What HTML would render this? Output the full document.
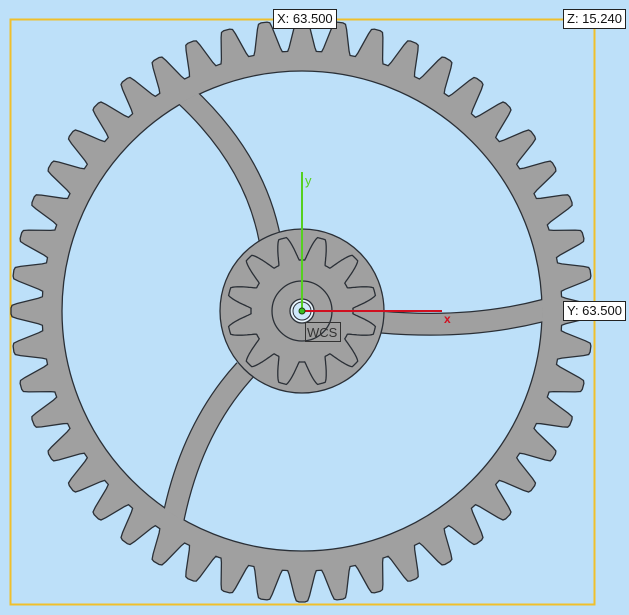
<!DOCTYPE html>
<html><head><style>
html,body{margin:0;padding:0;background:#bde0f9;}
body{width:629px;height:615px;overflow:hidden;position:relative;font-family:"Liberation Sans",sans-serif;}
.lbl{position:absolute;background:#fff;border:1px solid #222;font-size:13px;line-height:18px;padding:0 3px;color:#111;white-space:nowrap;}
</style></head><body>
<svg id="s" width="629" height="615" style="position:absolute;left:0;top:0">
<defs>
<clipPath id="c1"><circle cx="302" cy="311" r="239.5"/></clipPath>
<clipPath id="c2"><circle cx="302" cy="311" r="241"/></clipPath>
</defs>
<rect x="10.5" y="19.5" width="584" height="585" fill="none" stroke="#f0bf2c" stroke-width="2"/>
<path id="gear" fill="#a0a0a0" stroke="#2a2f36" stroke-width="1.3" fill-rule="evenodd"/>
<g clip-path="url(#c1)" fill="none" stroke="#2a2f36" stroke-width="23">
<path d="M270 240 Q255 160 185 95"/>
<path d="M380 322 Q470 330 545 310"/>
<path d="M245 370 Q190 430 172 525"/>
</g>
<g clip-path="url(#c2)" fill="none" stroke="#a0a0a0" stroke-width="20.5">
<path d="M270 240 Q255 160 185 95"/>
<path d="M380 322 Q470 330 545 310"/>
<path d="M245 370 Q190 430 172 525"/>
</g>
<circle cx="302" cy="311" r="82" fill="#a0a0a0" stroke="#2a2f36" stroke-width="1.3"/>
<path id="pin" fill="none" stroke="#2a2f36" stroke-width="1.3"/>
<circle cx="302" cy="311" r="30" fill="none" stroke="#2a2f36" stroke-width="1.3"/>
<circle cx="302" cy="311" r="12" fill="#e8f4fc" stroke="#2a2f36" stroke-width="1.3"/>
<circle cx="302" cy="311" r="9" fill="#cfe8fa" stroke="#2a2f36" stroke-width="1"/>
<line x1="302" y1="311" x2="302" y2="172" stroke="#55d020" stroke-width="2"/>
<line x1="302" y1="311" x2="442" y2="311" stroke="#d01020" stroke-width="2"/>
<text x="305" y="185" fill="#55d020" font-size="13" font-family="Liberation Sans">y</text>
<text x="444" y="323" fill="#d01020" font-size="12" font-weight="bold" font-family="Liberation Sans">x</text>
<circle cx="302" cy="311" r="3" fill="#3bbf20" stroke="#1a4a10"/>
<rect x="305.5" y="322.5" width="35" height="19" fill="none" stroke="#333"/>
<text x="307" y="337" fill="#333" font-size="13" font-family="Liberation Sans">WCS</text>
</svg>
<div class="lbl" style="left:273px;top:9px">X: 63.500</div>
<div class="lbl" style="left:563px;top:9px">Z: 15.240</div>
<div class="lbl" style="left:563px;top:301px">Y: 63.500</div>
<script>
var cx=302,cy=311,N=48,d="",rt=291,rr=260,ri=240;
function P(r,a){return (cx+r*Math.cos(a)).toFixed(1)+" "+(cy+r*Math.sin(a)).toFixed(1);}
var st=2*Math.PI/N;
for(var i=0;i<N;i++){
 var a=-Math.PI/2+i*st;
 var pts=[[rr,a-st*0.5],[rr,a-st*0.42],[rr+4,a-st*0.37],[rt-6,a-st*0.2],[rt-1,a-st*0.15],[rt,a-st*0.08],[rt,a+st*0.08],[rt-1,a+st*0.15],[rt-6,a+st*0.2],[rr+4,a+st*0.37],[rr,a+st*0.42]];
 for(var j=0;j<pts.length;j++) d+=(i==0&&j==0?"M":"L")+P(pts[j][0],pts[j][1]);
}
d+="Z M"+(cx+ri)+" "+cy+" A"+ri+" "+ri+" 0 1 0 "+(cx-ri)+" "+cy+" A"+ri+" "+ri+" 0 1 0 "+(cx+ri)+" "+cy+"Z";
document.getElementById("gear").setAttribute("d",d);
var p="";
for(var k=0;k<=720;k++){
 var t=k/720*2*Math.PI;
 var v=Math.cos(12*(t+Math.PI/2-Math.PI/12));
 v=Math.max(-1,Math.min(1,1.25*v));
 var r=63+12*v;
 p+=(k==0?"M":"L")+P(r,t);
}
document.getElementById("pin").setAttribute("d",p+"Z");
</script>
</body></html>
